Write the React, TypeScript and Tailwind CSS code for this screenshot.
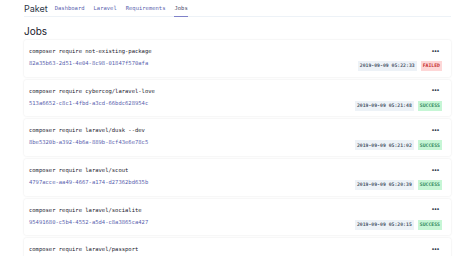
import React from 'react';

const mono = { fontFamily: '"DejaVu Sans Mono", "Liberation Mono", monospace' };

const jobs = [
    { cmd: 'composer require not-existing-package', id: '82a35b63-2d51-4e04-8c98-01847f570afa', at: '2019-09-09 05:22:33', ok: false },
    { cmd: 'composer require cybercog/laravel-love', id: '513a6652-c8c1-4fbd-a3cd-66bdc628954c', at: '2019-09-09 05:21:48', ok: true },
    { cmd: 'composer require laravel/dusk --dev', id: '8be5320b-a392-4b6a-889b-8cf43e6e78c5', at: '2019-09-09 05:21:02', ok: true },
    { cmd: 'composer require laravel/scout', id: '4797acce-aa49-4667-a174-d27362bd635b', at: '2019-09-09 05:20:39', ok: true },
    { cmd: 'composer require laravel/socialite', id: '95491680-c5b4-4552-a5d4-c8a3865ca427', at: '2019-09-09 05:20:15', ok: true },
    { cmd: 'composer require laravel/passport', id: '1c0e7a52-9b3d-4f61-a2e8-7d5b0c94e318', at: '2019-09-09 05:19:51', ok: true },
]

const Job = ({ cmd, id, at, ok }: typeof jobs[0]) => (
    <div className="h-[36.7px] shrink-0 pl-[5px] pr-[9px] pt-[7px] bg-white rounded-[2px] shadow-[0_0_2px_rgba(0,0,0,0.12)]" style={mono}>
        <div className="flex justify-between items-center h-[8px]">
            <span className="text-[5.5px] leading-[8px] text-[#1a202c]">{cmd}</span>
            <span className="mr-[3px] text-[5px] font-bold leading-none tracking-[-0.5px] text-[#2d3748]">•••</span>
        </div>
        <div className="mt-[4px] flex justify-between items-start">
            <span className="text-[5.5px] leading-[8px] text-[#5a5fae]">{id}</span>
            <div className="mt-[2px] h-[10px] flex gap-[4px]">
                <span className="px-[2px] flex items-center bg-[#edf2f7] text-[4.8px] font-bold text-[#4a5568]">{at}</span>
                <span className={`px-[2px] flex items-center text-[4.8px] font-bold ${ok ? 'bg-[#c6f6d5] text-[#2f855a]' : 'bg-[#fed7d7] text-[#c53030]'}`}>{ok ? 'SUCCESS' : 'FAILED'}</span>
            </div>
        </div>
    </div>
)

export default function App() {
    return (
        <div className="h-[256px] overflow-hidden bg-white pl-[24px] pr-[23px]">
            <div className="flex items-center h-[17px] border-b border-[#edf2f7]">
                <span className="text-[9px] leading-none text-[#2d3748] mr-[7px]" style={{ fontFamily: 'Inter, sans-serif' }}>Paket</span>
                <nav className="flex h-full gap-[9px] text-[5.5px]" style={mono}>
                    <span className="flex items-center text-[#5a5fae]">Dashboard</span>
                    <span className="flex items-center text-[#5a5fae]">Laravel</span>
                    <span className="flex items-center text-[#5a5fae]">Requirements</span>
                    <span className="flex items-center text-[#4a4a6a] border-b border-[#7f82c9] -mb-px">Jobs</span>
                </nav>
            </div>
            <h1 className="mt-[8px] text-[10px] leading-[12px] text-[#1a202c]" style={{ fontFamily: 'Inter, sans-serif' }}>Jobs</h1>
            <div className="mt-[3px] flex flex-col gap-[3px]">
                {jobs.map(j => <Job key={j.id} {...j} />)}
            </div>
        </div>
    )
}
